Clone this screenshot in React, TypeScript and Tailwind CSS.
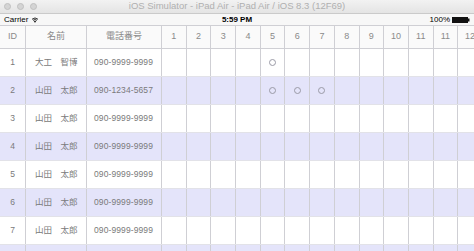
const rows = [
  { id: 1, name: "大工　智博", tel: "090-9999-9999", marks: [5] },
  { id: 2, name: "山田　太郎", tel: "090-1234-5657", marks: [5, 6, 7] },
  { id: 3, name: "山田　太郎", tel: "090-9999-9999", marks: [] },
  { id: 4, name: "山田　太郎", tel: "090-9999-9999", marks: [] },
  { id: 5, name: "山田　太郎", tel: "090-9999-9999", marks: [] },
  { id: 6, name: "山田　太郎", tel: "090-9999-9999", marks: [] },
  { id: 7, name: "山田　太郎", tel: "090-9999-9999", marks: [] },
  { id: 8, name: "", tel: "", marks: [] },
];

const days = ["1", "2", "3", "4", "5", "6", "7", "8", "9", "10", "11", "11", "12"];

const font = "font-['Helvetica_Neue','Liberation_Sans','Noto_Sans_CJK_JP',sans-serif]";
const cols = "grid grid-cols-[26px_61px_75px_repeat(13,24.7px)]";
const cell = "border-r border-[#cfcfd4] flex items-center";

const Battery = () => (
  <svg width="18" height="6" viewBox="0 0 18 6">
    <rect x="0" y="0" width="16" height="6" fill="#111" />
    <rect x="16" y="1.5" width="1.5" height="3" fill="#111" />
  </svg>
);

const Wifi = () => (
  <svg width="8" height="6" viewBox="0 0 12 10">
    <path d="M6 9.5 L4 7.3 A3 3 0 0 1 8 7.3 Z" fill="#222" />
    <path d="M1 3.8 A7.5 7.5 0 0 1 11 3.8" stroke="#222" strokeWidth="1.6" fill="none" />
    <path d="M2.8 5.6 A5 5 0 0 1 9.2 5.6" stroke="#222" strokeWidth="1.6" fill="none" />
  </svg>
);

export default function App() {
  return (
    <div className={`w-[474px] h-[251px] overflow-hidden bg-white ${font}`}>
      {/* window title bar */}
      <div className="h-[14px] bg-gradient-to-b from-[#f2f2f2] to-[#e4e4e4] border-b border-[#cacaca] flex items-center relative">
        <div className="flex gap-[6px] pl-[4px]">
          <span className="w-[7px] h-[7px] rounded-full bg-[#d4d4d4] border border-[#c0c0c0]" />
          <span className="w-[7px] h-[7px] rounded-full bg-[#d4d4d4] border border-[#c0c0c0]" />
          <span className="w-[7px] h-[7px] rounded-full bg-[#d4d4d4] border border-[#c0c0c0]" />
        </div>
        <div className="absolute inset-0 flex items-center justify-center text-[9.5px] text-[#b0b0b0]">
          iOS Simulator - iPad Air - iPad Air / iOS 8.3 (12F69)
        </div>
      </div>

      {/* status bar */}
      <div className="h-[11px] bg-[#f7f7f7] flex items-center justify-between pl-[4px] pr-[4px] relative text-[8px] text-black">
        <div className="flex items-center gap-[3px]">
          <span>Carrier</span>
          <Wifi />
        </div>
        <div className="absolute inset-0 flex items-center justify-center font-bold">5:59 PM</div>
        <div className="flex items-center gap-[2px]">
          <span>100%</span>
          <Battery />
        </div>
      </div>

      {/* header */}
      <div className={`${cols} h-[24px] bg-[#fafafa] border-t border-b border-[#cfcfd4] text-[9px] text-[#8a8a8a]`}>
        <div className={`${cell} justify-center`}>ID</div>
        <div className={`${cell} justify-center`}>名前</div>
        <div className={`${cell} justify-center`}>電話番号</div>
        {days.map((d, i) => (
          <div key={i} className={`${cell} justify-center`}>{d}</div>
        ))}
      </div>

      {/* rows */}
      {rows.map((r) => (
        <div
          key={r.id}
          className={`${cols} h-[28px] border-b border-[#e2e2e8] text-[8.5px] text-[#7a7a7a] ${
            r.id % 2 === 0 ? "bg-[#e4e4fa]" : "bg-white"
          }`}
        >
          <div className={`${cell} justify-center`}>{r.name ? r.id : ""}</div>
          <div className={`${cell} pl-[9px] whitespace-pre`}>{r.name}</div>
          <div className={`${cell} pl-[7px] tracking-[0.1px]`}>{r.tel}</div>
          {days.map((_, i) => (
            <div key={i} className={`${cell} justify-center`}>
              {r.marks.includes(i + 1) && (
                <span className="w-[7px] h-[7px] rounded-full border border-[#9a9aa6]" />
              )}
            </div>
          ))}
        </div>
      ))}
    </div>
  );
}
